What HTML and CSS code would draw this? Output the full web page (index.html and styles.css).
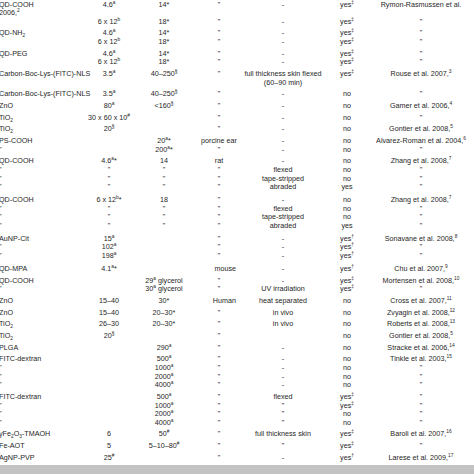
FILE: index.html
```html
<!DOCTYPE html>
<html>
<head>
<meta charset="utf-8">
<link rel="stylesheet" href="styles.css">
</head>
<body>
<div class="page">
<table class="tbl">
<colgroup><col class="w1"><col class="w2"><col class="w3"><col class="w4"><col class="w5"><col class="w6"><col class="w7"></colgroup>
<tbody>
<tr><td>QD-COOH</td><td>4.6<sup>a</sup></td><td>14*</td><td>"</td><td>-</td><td>yes<sup>‡</sup></td><td>Rymon-Rasmussen et al.</td></tr>
<tr><td>2006,<sup>2</sup></td><td></td><td></td><td></td><td></td><td></td><td></td></tr>
<tr><td></td><td>6 x 12<sup>b</sup></td><td>18*</td><td>"</td><td>-</td><td>yes<sup>‡</sup></td><td>"</td></tr>
<tr class="g"><td>QD-NH<sub>2</sub></td><td>4.6<sup>a</sup></td><td>14*</td><td>"</td><td>-</td><td>yes<sup>‡</sup></td><td>"</td></tr>
<tr><td></td><td>6 x 12<sup>b</sup></td><td>18*</td><td>"</td><td>-</td><td>yes<sup>‡</sup></td><td>"</td></tr>
<tr class="g"><td>QD-PEG</td><td>4.6<sup>a</sup></td><td>14*</td><td>"</td><td>-</td><td>yes<sup>‡</sup></td><td>"</td></tr>
<tr><td></td><td>6 x 12<sup>b</sup></td><td>18*</td><td>"</td><td>-</td><td>yes<sup>‡</sup></td><td>"</td></tr>
<tr class="g"><td>Carbon-Boc-Lys-(FITC)-NLS</td><td>3.5<sup>a</sup></td><td>40–250<sup>§</sup></td><td>"</td><td>full thickness skin flexed</td><td>yes<sup>‡</sup></td><td>Rouse et al. 2007,<sup>3</sup></td></tr>
<tr><td></td><td></td><td></td><td></td><td>(60–90 min)</td><td></td><td></td></tr>
<tr class="g"><td>Carbon-Boc-Lys-(FITC)-NLS</td><td>3.5<sup>a</sup></td><td>40–250<sup>§</sup></td><td>"</td><td>-</td><td>no</td><td>"</td></tr>
<tr class="g"><td>ZnO</td><td>80<sup>a</sup></td><td>&lt;160<sup>§</sup></td><td>"</td><td>-</td><td>no</td><td>Gamer et al. 2006,<sup>4</sup></td></tr>
<tr class="g"><td>TiO<sub>2</sub></td><td>30 x 60 x 10<sup>#</sup></td><td></td><td>"</td><td>-</td><td>no</td><td>"</td></tr>
<tr class="g"><td>TiO<sub>2</sub></td><td>20<sup>§</sup></td><td></td><td>"</td><td>-</td><td>no</td><td>Gontier et al. 2008,<sup>5</sup></td></tr>
<tr class="g"><td>PS-COOH</td><td></td><td>20<sup>a</sup>*</td><td>porcine ear</td><td>-</td><td>no</td><td>Alvarez-Roman et al. 2004,<sup>6</sup></td></tr>
<tr><td>"</td><td></td><td>200<sup>a</sup>*</td><td>"</td><td>-</td><td>no</td><td>"</td></tr>
<tr class="g"><td>QD-COOH</td><td>4.6<sup>a</sup>*</td><td>14</td><td>rat</td><td>-</td><td>no</td><td>Zhang et al. 2008,<sup>7</sup></td></tr>
<tr><td>"</td><td>"</td><td>"</td><td>"</td><td>flexed</td><td>no</td><td>"</td></tr>
<tr><td>"</td><td>"</td><td>"</td><td>"</td><td>tape-stripped</td><td>no</td><td>"</td></tr>
<tr><td>"</td><td>"</td><td>"</td><td>"</td><td>abraded</td><td>yes</td><td>"</td></tr>
<tr class="g g2"><td>QD-COOH</td><td>6 x 12<sup>b</sup>*</td><td>18</td><td>"</td><td>-</td><td>no</td><td>Zhang et al. 2008,<sup>7</sup></td></tr>
<tr><td>"</td><td>"</td><td>"</td><td>"</td><td>flexed</td><td>no</td><td>"</td></tr>
<tr><td>"</td><td>"</td><td>"</td><td>"</td><td>tape-stripped</td><td>no</td><td>"</td></tr>
<tr><td>"</td><td>"</td><td>"</td><td>"</td><td>abraded</td><td>yes</td><td>"</td></tr>
<tr class="g g2"><td>AuNP-Cit</td><td>15<sup>a</sup></td><td></td><td>"</td><td>-</td><td>yes<sup>†</sup></td><td>Sonavane et al. 2008,<sup>8</sup></td></tr>
<tr><td>"</td><td>102<sup>a</sup></td><td></td><td>"</td><td>-</td><td>yes<sup>†</sup></td><td>"</td></tr>
<tr><td>"</td><td>198<sup>a</sup></td><td></td><td>"</td><td>-</td><td>yes<sup>†</sup></td><td>"</td></tr>
<tr class="g g2"><td>QD-MPA</td><td>4.1<sup>a</sup>*</td><td></td><td class="r">mouse</td><td>-</td><td>yes<sup>†</sup></td><td>Chu et al. 2007,<sup>9</sup></td></tr>
<tr class="g"><td>QD-COOH</td><td></td><td>29<sup>a</sup> glycerol</td><td>"</td><td>-</td><td>yes<sup>‡</sup></td><td>Mortensen et al. 2008,<sup>10</sup></td></tr>
<tr><td>"</td><td></td><td>30<sup>a</sup> glycerol</td><td>"</td><td>UV irradiation</td><td>yes<sup>‡</sup></td><td>"</td></tr>
<tr class="g"><td>ZnO</td><td>15–40</td><td>30*</td><td class="r">Human</td><td>heat separated</td><td>no</td><td>Cross et al. 2007,<sup>11</sup></td></tr>
<tr class="g"><td>ZnO</td><td>15–40</td><td>20–30*</td><td>"</td><td>in vivo</td><td>no</td><td>Zvyagin et al. 2008,<sup>12</sup></td></tr>
<tr class="g"><td>TiO<sub>2</sub></td><td>26–30</td><td>20–30*</td><td>"</td><td>in vivo</td><td>no</td><td>Roberts et al. 2008,<sup>13</sup></td></tr>
<tr class="g"><td>TiO<sub>2</sub></td><td>20<sup>§</sup></td><td></td><td>"</td><td></td><td>no</td><td>Gontier et al. 2008,<sup>5</sup></td></tr>
<tr class="g"><td>PLGA</td><td></td><td>290<sup>a</sup></td><td>"</td><td>-</td><td>no</td><td>Stracke et al. 2006,<sup>14</sup></td></tr>
<tr class="g"><td>FITC-dextran</td><td></td><td>500<sup>a</sup></td><td>"</td><td>-</td><td>no</td><td>Tinkle et al. 2003,<sup>15</sup></td></tr>
<tr><td>"</td><td></td><td>1000<sup>a</sup></td><td>"</td><td>-</td><td>no</td><td>"</td></tr>
<tr><td>"</td><td></td><td>2000<sup>a</sup></td><td>"</td><td>-</td><td>no</td><td>"</td></tr>
<tr><td>"</td><td></td><td>4000<sup>a</sup></td><td>"</td><td>-</td><td>no</td><td>"</td></tr>
<tr class="g"><td>FITC-dextran</td><td></td><td>500<sup>a</sup></td><td>"</td><td>flexed</td><td>yes<sup>‡</sup></td><td>"</td></tr>
<tr><td>"</td><td></td><td>1000<sup>a</sup></td><td>"</td><td>"</td><td>yes<sup>‡</sup></td><td>"</td></tr>
<tr><td>"</td><td></td><td>2000<sup>a</sup></td><td>"</td><td>"</td><td>no</td><td>"</td></tr>
<tr><td>"</td><td></td><td>4000<sup>a</sup></td><td>"</td><td>"</td><td>no</td><td>"</td></tr>
<tr class="g"><td>γFe<sub>2</sub>O<sub>3</sub>-TMAOH</td><td>6</td><td>50<sup>#</sup></td><td>"</td><td>full thickness skin</td><td>yes<sup>‡</sup></td><td>Baroli et al. 2007,<sup>16</sup></td></tr>
<tr class="g"><td>Fe-AOT</td><td>5</td><td>5–10–80<sup>#</sup></td><td>"</td><td>"</td><td>yes<sup>‡</sup></td><td>"</td></tr>
<tr class="g"><td>AgNP-PVP</td><td>25<sup>#</sup></td><td></td><td>"</td><td>-</td><td>yes<sup>†</sup></td><td>Larese et al. 2009,<sup>17</sup></td></tr>
</tbody>
</table>
<div class="foot"></div>
</div>
</body>
</html>
```
FILE: styles.css
```css
html, body {
  margin: 0;
  padding: 0;
  background: #ffffff;
  overflow: hidden;
}
.page {
  width: 474px;
  height: 474px;
  overflow: hidden;
  display: flex;
  flex-direction: column;
}
.tbl {
  margin-top: 0.6px;
  margin-left: -1px;
  width: 475px;
  table-layout: fixed;
  border-collapse: collapse;
  font-family: "Liberation Sans", Arial, sans-serif;
  font-size: 7.2px;
  color: #262626;
  flex: none;
}
.w1 { width: 89px; }
.w2 { width: 42px; }
.w3 { width: 68px; }
.w4 { width: 42px; }
.w5 { width: 86px; }
.w6 { width: 42px; }
.w7 { width: 106px; }
.tbl td {
  padding: 0;
  line-height: 8.6px;
  height: 8.6px;
  white-space: nowrap;
  text-align: center;
  vertical-align: middle;
}
.tbl td:first-child { text-align: left; }
.tbl tr.g td { padding-top: 3.1px; }
.tbl tr.g2 td { padding-top: 4.4px; }
.tbl td.r { text-align: right; padding-right: 4px; }
.tbl sup {
  font-size: 4.8px;
  line-height: 0;
  vertical-align: 2.6px;
}
.tbl sub {
  font-size: 4.8px;
  line-height: 0;
  vertical-align: -1.5px;
}
.foot {
  margin-top: auto;
  height: 9px;
  background: #c3c3c3;
  flex: none;
}
```
